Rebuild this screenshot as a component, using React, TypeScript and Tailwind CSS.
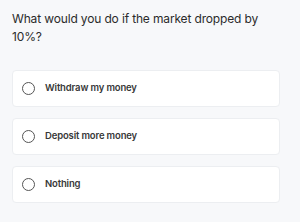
import React from "react";

const options = ["Withdraw my money", "Deposit more money", "Nothing"];

export default function App() {
  return (
    <div
      className="w-[300px] h-[222px] bg-[#f7f8fa] px-3 pt-[10px]"
      style={{ fontFamily: "Inter, Roboto, 'Noto Sans', sans-serif" }}
    >
      <h1 className="text-[12px] leading-[18px] tracking-[-0.15px] text-[#2b2b2b] font-normal pr-[8px]">
        What would you do if the market dropped by 10%?
      </h1>
      <div className="mt-[24px] flex flex-col gap-[11px] w-[268px]">
        {options.map((o) => (
          <div
            key={o}
            className="h-[37px] bg-white border border-[#eceef1] rounded-[4px] flex items-center pl-[9px]"
          >
            <span className="w-[13px] h-[13px] rounded-full border-[1.5px] border-[#555]" />
            <span className="ml-[10px] text-[9.5px] tracking-[-0.15px] font-semibold text-[#383838]">{o}</span>
          </div>
        ))}
      </div>
    </div>
  );
}
